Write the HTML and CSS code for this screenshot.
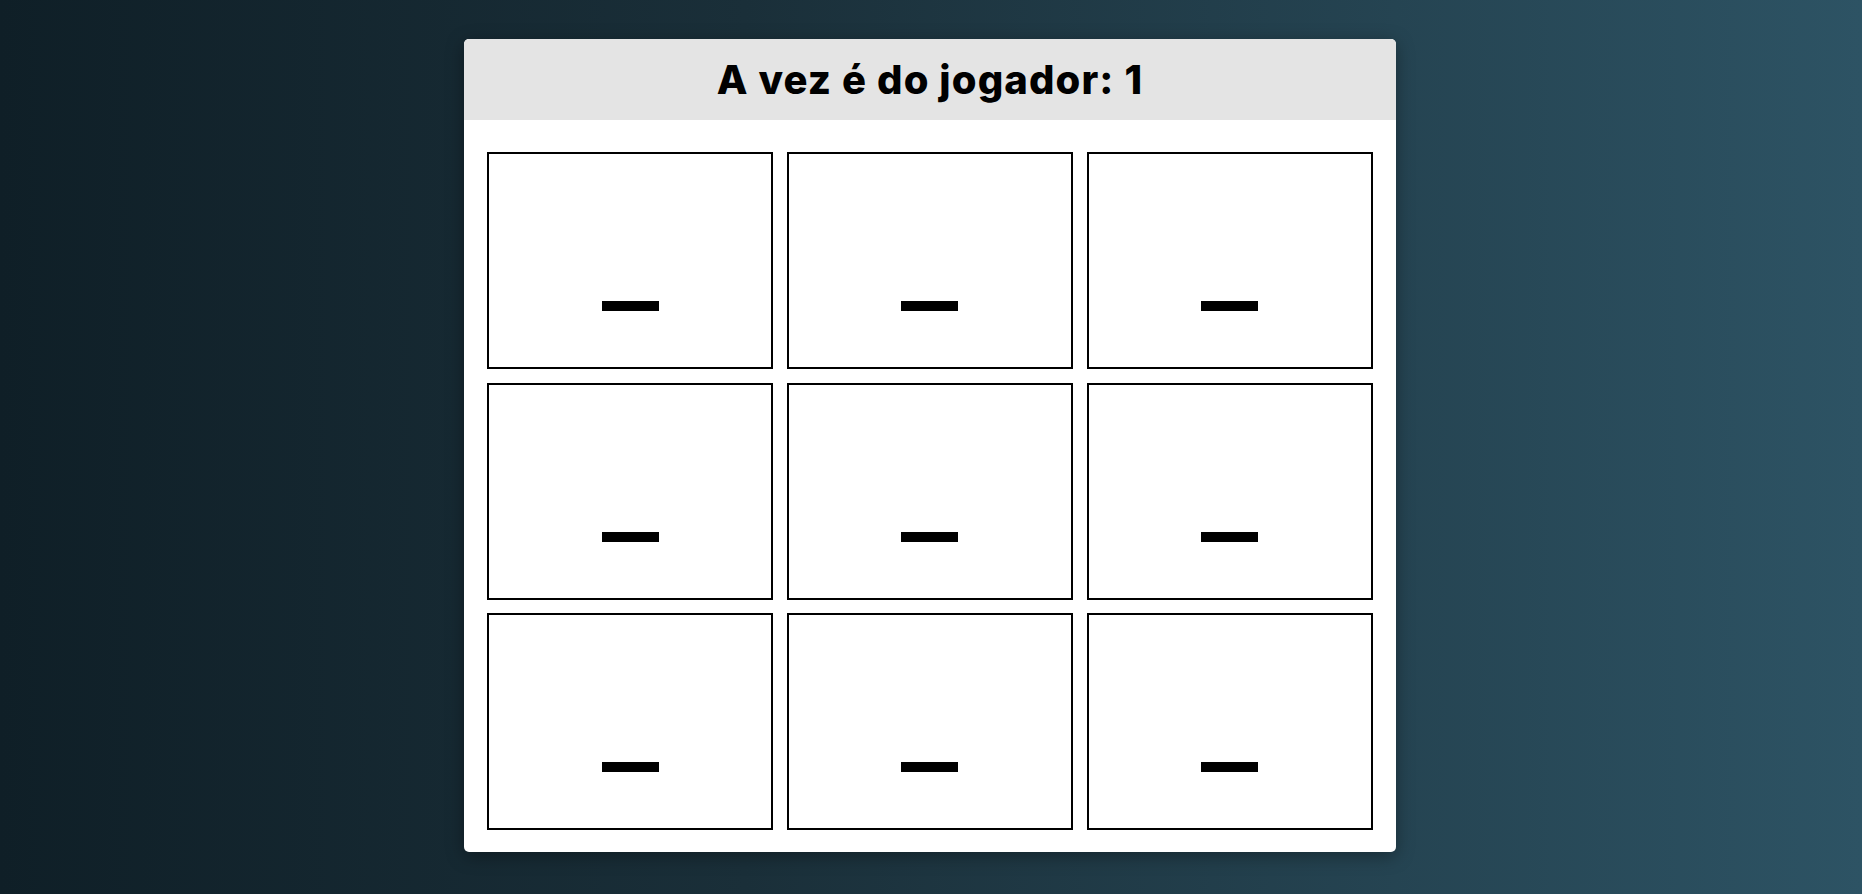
FILE: index.html
```html
<!DOCTYPE html>
<html lang="pt-BR">
<head>
    <meta charset="UTF-8">
    <meta name="viewport" content="width=device-width, initial-scale=1.0">
    <title>Jogo da Velha</title>
    <link rel="stylesheet" href="styles.css">
</head>
<body>
    <div class="board">
        <h2 class="turn">A vez é do jogador: <span id="player">1</span></h2>

        <div class="grid">
            <div class="cell"><span class="empty"></span></div>
            <div class="cell"><span class="empty"></span></div>
            <div class="cell"><span class="empty"></span></div>
            <div class="cell"><span class="empty"></span></div>
            <div class="cell"><span class="empty"></span></div>
            <div class="cell"><span class="empty"></span></div>
            <div class="cell"><span class="empty"></span></div>
            <div class="cell"><span class="empty"></span></div>
            <div class="cell"><span class="empty"></span></div>
        </div>
    </div>
</body>
</html>
```

FILE: styles.css
```css
body {
    font-family: Inter, 'Open Sans', sans-serif;
    margin: 0;
    padding: 39px 0 0;
    min-height: 100vh;
    box-sizing: border-box;
    background: linear-gradient(90deg, #0f1f27 0%, #1a2f39 40%, #2d5364 100%);
    display: flex;
    flex-direction: column;
    align-items: center;
}

.board {
    width: 932px;
    margin-right: 2px;
    background-color: white;
    border-radius: 5px;
    overflow: hidden;
    box-shadow: 0 4px 18px rgba(0, 0, 0, 0.35);
}

.turn {
    margin: 0;
    height: 81px;
    line-height: 82px;
    background-color: #e4e4e4;
    color: #000;
    text-align: center;
    font-size: 40px;
    font-weight: 800;
    letter-spacing: 1.1px;
}

.grid {
    display: grid;
    grid-template-columns: repeat(3, 1fr);
    grid-auto-rows: 217px;
    gap: 13.5px;
    padding: 32px 23px 22px;
}

.cell {
    border: 2px solid #000;
    display: flex;
    justify-content: center;
    align-items: flex-start;
    padding-top: 147px;
    cursor: pointer;
}

.empty {
    width: 57px;
    height: 10px;
    background-color: #000;
}
```
